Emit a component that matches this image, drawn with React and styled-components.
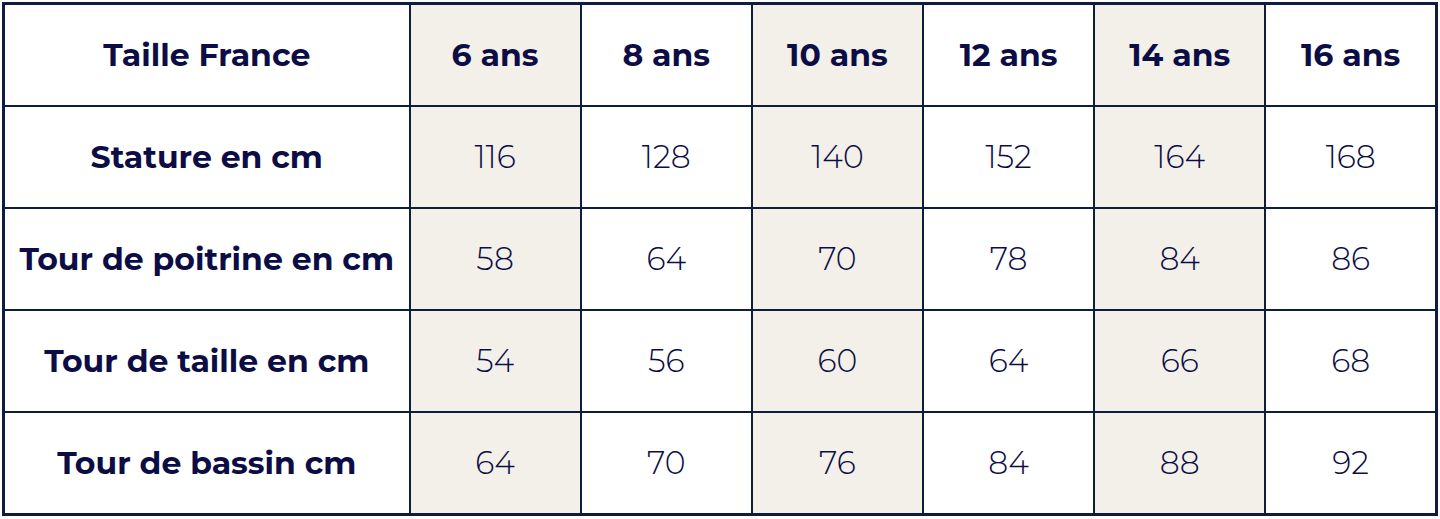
import React from 'react';
import styled, { createGlobalStyle } from 'styled-components';

const GlobalStyle = createGlobalStyle`
  html, body {
    margin: 0;
    padding: 0;
    background: #ffffff;
  }
`;

const Wrapper = styled.div`
  padding: 2px;
  font-family: 'Montserrat', 'DejaVu Sans', sans-serif;
  color: #0d0d45;
`;

const Table = styled.table`
  width: 1436px;
  border-collapse: collapse;
  table-layout: fixed;
  border: 3px solid #0e1d3b;
`;

const Cell = styled.td`
  height: 100px;
  padding: 0;
  text-align: center;
  vertical-align: middle;
  border: 2px solid #0e1d3b;
  background: ${({ $shaded }) => ($shaded ? '#f3f0ea' : '#ffffff')};
  font-size: 31.5px;
  font-weight: ${({ $bold }) => ($bold ? 700 : 300)};
`;

const LabelCol = styled.col`
  width: 406px;
`;

const sizes = ['6 ans', '8 ans', '10 ans', '12 ans', '14 ans', '16 ans'];

const rows = [
  { label: 'Stature en cm', values: [116, 128, 140, 152, 164, 168] },
  { label: 'Tour de poitrine en cm', values: [58, 64, 70, 78, 84, 86] },
  { label: 'Tour de taille en cm', values: [54, 56, 60, 64, 66, 68] },
  { label: 'Tour de bassin cm', values: [64, 70, 76, 84, 88, 92] },
];

export default function App() {
  return (
    <>
      <GlobalStyle />
      <Wrapper>
        <Table>
          <colgroup>
            <LabelCol />
            {sizes.map(s => (
              <col key={s} />
            ))}
          </colgroup>
          <tbody>
            <tr>
              <Cell as="th" $bold>Taille France</Cell>
              {sizes.map((s, i) => (
                <Cell as="th" key={s} $bold $shaded={i % 2 === 0}>
                  {s}
                </Cell>
              ))}
            </tr>
            {rows.map(row => (
              <tr key={row.label}>
                <Cell as="th" $bold>{row.label}</Cell>
                {row.values.map((v, i) => (
                  <Cell key={i} $shaded={i % 2 === 0}>
                    {v}
                  </Cell>
                ))}
              </tr>
            ))}
          </tbody>
        </Table>
      </Wrapper>
    </>
  );
}
